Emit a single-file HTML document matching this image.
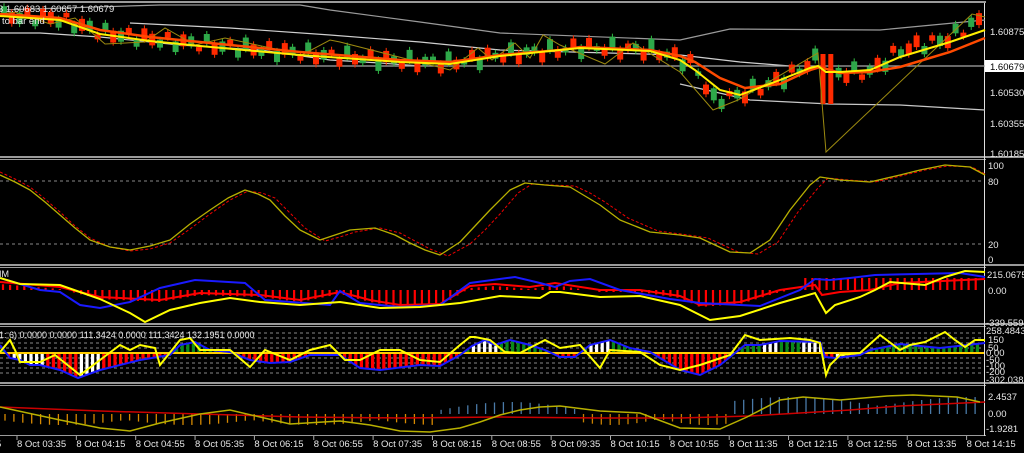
<!DOCTYPE html>
<html><head><meta charset="utf-8">
<style>
html,body{margin:0;padding:0;background:#000;width:1024px;height:453px;overflow:hidden}
svg{display:block}
text{font-family:"Liberation Sans",sans-serif;font-size:9.5px;fill:#e8e8e8}
</style></head><body>
<svg id="s" width="1024" height="453" viewBox="0 0 1024 453" xmlns="http://www.w3.org/2000/svg">
<rect width="1024" height="453" fill="#000"/>
<g fill="#9a9a9a">
<rect x="0" y="1" width="986" height="2"/>
<rect x="0" y="156" width="1024" height="2"/><rect x="0" y="159" width="986" height="1"/>
<rect x="0" y="264" width="1024" height="2"/><rect x="0" y="267" width="986" height="1"/>
<rect x="0" y="323" width="1024" height="2"/><rect x="0" y="326" width="986" height="1"/>
<rect x="0" y="382" width="1024" height="2"/><rect x="0" y="385" width="986" height="1"/>
<rect x="0" y="435" width="986" height="1"/>
</g>
<rect x="984" y="3" width="1" height="433" fill="#e0e0e0"/>
<g fill="none" stroke-width="1.2">
<polyline stroke="#9a9a9a" points="0,10 160,5 300,5 330,10 420,22 500,33 680,40 730,29 880,30 985,20"/>
<polyline stroke="#cfcfcf" points="0,33 40,33 100,37 180,45 260,50 330,60 380,63 420,66"/>
<polyline stroke="#cfcfcf" points="130,23 230,28 330,35 420,42 500,50 680,55 740,62 790,66"/>
<polyline stroke="#c8c8c8" points="680,84 750,100 830,104 900,105 985,110"/>
<line x1="0" y1="66" x2="985" y2="66" stroke="#a8a8a8"/>
</g>
<g id="candles"></g>
<polyline fill="none" stroke="#9c8a10" stroke-width="1" points="0,14 15,12 50,24 75,18 105,44 145,42 165,28 195,45 225,38 280,50 300,56 330,40 340,42 450,70 478,48 492,60 515,43 530,58 543,35 560,45 605,64 633,43 680,72 713,110 738,100 818,53 826,152 972,14 985,17"/>
<polyline fill="none" stroke="#ff4a00" stroke-width="2.5" points="0,14 60,18 100,30 150,37 200,42 300,52 400,60 450,62 500,55 560,50 580,47 650,50 680,56 695,62 720,78 745,88 780,84 810,70 820,67 840,73 870,72 900,67 950,52 985,38"/>
<polyline fill="none" stroke="#ffee00" stroke-width="2" points="0,16 60,20 100,34 150,41 200,46 300,55 400,62 450,64 500,56 560,50 580,48 650,51 680,60 695,70 720,90 740,95 780,80 810,68 818,66 826,72 840,72 870,70 900,57 950,42 985,30"/>
<g>
<text x="990" y="35">1.60875</text>
<rect x="985" y="60" width="39" height="12" fill="#fff"/>
<text x="990" y="70" style="fill:#000">1.60679</text>
<text x="990" y="96">1.60530</text>
<text x="990" y="127">1.60355</text>
<text x="990" y="157">1.60185</text>
</g>
<text x="-2" y="12">3 1.60683 1.60657 1.60679</text>
<text x="2" y="24">to bar end</text>
<g stroke="#888" stroke-dasharray="3,3" stroke-width="1">
<line x1="0" y1="181" x2="984" y2="181"/><line x1="0" y1="244" x2="984" y2="244"/>
</g>
<polyline fill="none" stroke="#e00" stroke-width="1" stroke-dasharray="3,2" stroke-linejoin="round" points="0,172 15,179 30,187 45,199 60,212 75,226 90,238 110,247 130,251 150,249 170,243 190,229 210,214 230,200 248,191 262,193 275,198 290,213 305,228 325,241 340,237 355,232 380,228 400,233 415,241 430,249 448,256 470,244 485,230 500,214 518,193 532,184 550,185 575,186 590,193 605,202 628,218 658,231 688,235 708,238 738,252 758,254 778,242 798,212 818,188 828,178 848,180 875,182 905,175 925,170 948,166 972,167 985,174"/>
<polyline fill="none" stroke="#b8b000" stroke-width="1.3" stroke-linejoin="round" points="0,175 15,182 30,190 45,202 60,215 75,228 90,240 110,247 130,250 150,246 170,240 190,224 210,210 228,198 245,190 258,194 270,200 285,216 300,230 320,240 335,235 350,230 375,228 395,235 410,243 425,250 440,255 460,242 475,226 490,210 510,190 525,183 545,185 570,187 585,196 600,205 620,220 650,232 680,235 700,238 730,252 750,253 770,240 790,210 810,185 820,177 840,180 870,182 900,175 920,170 945,165 970,167 985,175"/>
<text x="988" y="169">100</text><text x="988" y="185">80</text><text x="988" y="248">20</text><text x="988" y="263">0</text>
<g id="macdh"></g>
<polyline fill="none" stroke="#ff0000" stroke-width="2" points="0,282 60,287 100,297 160,300 200,293 260,295 300,300 340,292 370,300 400,305 440,304 470,286 495,284 530,287 555,283 600,290 640,290 680,296 700,305 740,302 780,290 815,285 822,295 840,292 870,290 900,283 985,279"/>
<polyline fill="none" stroke="#1a1aff" stroke-width="2" points="0,278 20,284 40,290 60,292 80,305 100,308 130,302 160,288 195,280 245,283 265,300 330,305 340,291 360,303 400,307 440,305 470,283 515,277 540,283 555,287 570,281 590,279 620,290 670,299 700,303 760,306 800,290 815,279 830,280 850,278 875,275 960,273 985,277"/>
<polyline fill="none" stroke="#ffff00" stroke-width="2" points="0,278 20,284 60,285 100,299 130,313 145,322 170,310 200,303 230,298 260,302 300,305 340,302 380,308 420,307 460,303 500,296 540,298 550,292 560,292 600,297 640,296 680,305 710,320 740,316 780,303 815,293 826,313 835,305 860,297 875,290 890,282 925,285 945,277 965,271 985,272"/>
<text x="-1" y="277" style="font-size:9px">IM</text>
<text x="987" y="278">215.0675</text><text x="988" y="294">0.00</text><text x="986" y="326">-339.5593</text>
<g stroke="#888" stroke-dasharray="3,3" stroke-width="1">
<line x1="0" y1="333" x2="984" y2="333"/><line x1="0" y1="338" x2="984" y2="338"/><line x1="0" y1="343" x2="984" y2="343"/><line x1="0" y1="348" x2="984" y2="348"/>
<line x1="0" y1="358" x2="984" y2="358"/><line x1="0" y1="363" x2="984" y2="363"/><line x1="0" y1="368" x2="984" y2="368"/><line x1="0" y1="373" x2="984" y2="373"/>
</g>
<g id="ccih"></g>
<line x1="0" y1="353" x2="984" y2="353" stroke="#ffcc00" stroke-width="2"/>
<polyline fill="none" stroke="#1a1aff" stroke-width="2" points="0,345 10,358 20,360 30,365 40,365 60,370 78,378 100,370 140,360 170,355 180,345 195,342 210,350 230,352 250,360 270,363 290,362 310,355 340,355 360,368 380,370 420,365 440,366 460,355 472,346 485,340 495,345 510,340 530,345 545,350 560,357 575,357 590,345 610,340 630,348 650,352 680,370 700,375 720,365 745,345 760,345 780,341 820,342 825,357 835,358 860,355 870,350 900,344 940,348 985,343"/>
<polyline fill="none" stroke="#ffff00" stroke-width="2" points="0,352 10,340 15,350 20,362 40,362 55,355 80,375 100,360 120,345 130,350 140,345 155,348 160,365 180,340 190,338 200,350 230,350 250,367 265,350 290,360 310,350 330,345 345,360 360,360 380,350 400,350 420,360 440,362 460,345 470,337 475,337 490,340 505,352 520,353 545,340 560,348 580,345 600,368 610,350 640,352 660,365 680,370 700,365 730,355 745,335 760,340 790,338 810,340 820,343 826,375 830,365 840,355 860,353 880,335 900,350 910,345 925,342 945,332 955,340 965,347 975,340 985,340"/>
<text x="-1" y="338" style="font-size:9px">1: 6)  0.0000 0.0000 111.3424 0.0000 111.3424 132.1951 0.0000</text>
<g style="font-size:8.5px">
<text x="986" y="334">258.4843</text><text x="988" y="343">150</text><text x="988" y="351">50</text><text x="986" y="356">0.00</text>
<text x="986" y="363">-50</text><text x="986" y="369">-100</text><text x="986" y="375">-200</text><text x="986" y="383">-302.0386</text>
</g>
<g id="lasth"></g>
<polyline fill="none" stroke="#cc0000" stroke-width="1.5" points="0,407 100,411 200,414 300,417 400,418 500,417 600,418 680,418 750,416 800,413 850,410 900,406 985,402"/>
<polyline fill="none" stroke="#b8b000" stroke-width="1.5" points="0,407 60,420 100,428 130,431 160,423 200,414 230,410 260,417 290,424 340,421 370,425 400,431 430,432 460,428 480,422 500,415 520,410 540,407 560,406 600,411 640,413 680,428 720,429 747,417 780,400 803,397 840,400 887,396 913,395 957,397 980,402"/>
<text x="988" y="400">2.4537</text><text x="988" y="417">0.00</text><text x="986" y="432">-1.9281</text>
<g id="taxis"></g>
</svg>
<script>
var NS="http://www.w3.org/2000/svg";
function el(p,t,a){var e=document.createElementNS(NS,t);for(var k in a)e.setAttribute(k,a[k]);p.appendChild(e);return e;}
function interp(pts,x){for(var i=0;i<pts.length-1;i++){if(x>=pts[i][0]&&x<=pts[i+1][0]){var f=(x-pts[i][0])/((pts[i+1][0]-pts[i][0])||1);return pts[i][1]+f*(pts[i+1][1]-pts[i][1]);}}return pts[pts.length-1][1];}
function P(s){return s.trim().split(/\s+/).map(function(q){return q.split(',').map(Number)});}
var ma=P("0,15 60,19 100,32 150,39 200,44 300,53 400,61 450,63 500,55 560,50 580,47 650,50 680,58 695,66 713,100 738,95 760,88 790,75 818,58 826,72 840,73 870,72 900,50 950,38 975,22 985,20");
var cg=document.getElementById('candles');
for(var x=4;x<980;x+=7.8){var y=interp(ma,x);var up=Math.sin(x*0.37)>0;var h=4+Math.abs(Math.sin(x*0.9))*8;var off=Math.sin(x*1.3)*6;
if(x>820&&x<832){el(cg,'rect',{x:x-2.5,y:54,width:5,height:50,fill:'#ff2a00'});continue;}
el(cg,'line',{x1:x,y1:y+off-h/2-3,x2:x,y2:y+off+h/2+3,stroke:up?'#30c040':'#ff3000'});
el(cg,'rect',{x:x-3,y:y+off-h/2,width:6,height:h,fill:up?'#2ea84a':'#ff2a00'});}
var red=P("0,282 60,287 100,297 160,300 200,293 260,295 300,300 340,292 370,300 400,305 440,304 470,286 495,284 530,287 555,283 600,290 640,290 680,296 700,305 740,302 780,290 815,285 822,295 840,292 870,290 900,283 985,279");
var mg=document.getElementById('macdh');
for(var x=3;x<982;x+=7.1){var y=interp(red,x)+2;var yy=(x>800)?Math.min(y,278):y;if(Math.abs(yy-290)<1)continue;
el(mg,'line',{x1:x,y1:290,x2:x,y2:yy,stroke:'#ff0000','stroke-width':2.2});}
var blue=P("0,345 10,358 20,360 30,365 40,365 60,370 78,378 100,370 140,360 170,355 180,345 195,342 210,350 230,352 250,360 270,363 290,362 310,355 340,355 360,368 380,370 420,365 440,366 460,355 472,346 485,340 495,345 510,340 530,345 545,350 560,357 575,357 590,345 610,340 630,348 650,352 680,370 700,375 720,365 745,345 760,345 780,341 820,342 825,357 835,358 860,355 870,350 900,344 940,348 985,343");
var cgh=document.getElementById('ccih');
var white=[[12,45],[80,100],[470,500],[590,610],[760,780],[800,825],[832,845]];
for(var x=3;x<982;x+=5.6){var y=interp(blue,x);var c;
var w=false;for(var i=0;i<white.length;i++)if(x>=white[i][0]&&x<=white[i][1])w=true;
if(w)c='#ffffff';else if(y<353)c='#0a8a1a';else c='#ff0000';
el(cgh,'line',{x1:x,y1:353,x2:x,y2:y,stroke:c,'stroke-width':3.2});}
var lg=document.getElementById('lasth');
for(var x=5;x<982;x+=8.9){var val,col;
if(x<440){val=6+5*Math.abs(Math.sin(x/40));col='#d88a00';}
else if(x<580){val=-(4+8*Math.sin((x-440)/140*Math.PI));col='#4a7aa8';}
else if(x<730){val=5+6*Math.abs(Math.sin(x/30));col='#c88000';}
else{val=-(8+9*Math.abs(Math.sin((x-700)/180*Math.PI)));col='#4a7aa8';}
el(lg,'line',{x1:x,y1:414,x2:x,y2:414+val,stroke:col,'stroke-width':1.3});}
var ta=document.getElementById('taxis');
var labs=["03:35","04:15","04:55","05:35","06:15","06:55","07:35","08:15","08:55","09:35","10:15","10:55","11:35","12:15","12:55","13:35","14:15"];
var t0=el(ta,'text',{x:-4,y:447});t0.textContent="5";
for(var i=0;i<labs.length;i++){var x=17+i*59.35;
el(ta,'line',{x1:x,y1:436,x2:x,y2:440,stroke:'#aaa'});
var t=el(ta,'text',{x:x,y:447});t.textContent="8 Oct "+labs[i];}
</script>
</body></html>
